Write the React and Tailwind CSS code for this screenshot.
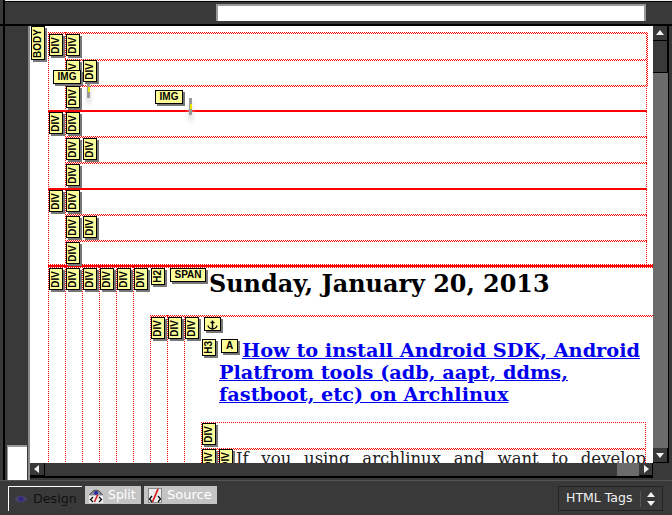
const ORIGIN_X = 30;
const ORIGIN_Y = 26;

// design view markers, drawn in paint order
const tags = [
  { label: "BODY", x: 31, y: 26, h: 34 },
  { label: "DIV", x: 49, y: 34 },
  { label: "DIV", x: 66, y: 34 },
  { label: "DIV", x: 66, y: 60 },
  { label: "IMG", x: 53, y: 70, w: 28, flat: true },
  { label: "DIV", x: 83, y: 60 },
  { label: "DIV", x: 66, y: 86 },
  { label: "IMG", x: 155, y: 90, w: 28, flat: true },
  { label: "DIV", x: 49, y: 112 },
  { label: "DIV", x: 66, y: 112 },
  { label: "DIV", x: 66, y: 138 },
  { label: "DIV", x: 83, y: 138 },
  { label: "DIV", x: 66, y: 164 },
  { label: "DIV", x: 49, y: 190 },
  { label: "DIV", x: 66, y: 190 },
  { label: "DIV", x: 66, y: 216 },
  { label: "DIV", x: 83, y: 216 },
  { label: "DIV", x: 66, y: 242 },
  { label: "DIV", x: 49, y: 268 },
  { label: "DIV", x: 66, y: 268 },
  { label: "DIV", x: 83, y: 268 },
  { label: "DIV", x: 100, y: 268 },
  { label: "DIV", x: 117, y: 268 },
  { label: "DIV", x: 134, y: 268 },
  { label: "H2", x: 151, y: 268, h: 17 },
  { label: "SPAN", x: 170, y: 268, w: 36, flat: true },
  { label: "DIV", x: 151, y: 317 },
  { label: "DIV", x: 168, y: 317 },
  { label: "DIV", x: 185, y: 317 },
  { label: "H3", x: 202, y: 339, h: 17 },
  { label: "A", x: 221, y: 339, w: 17, flat: true },
  { label: "DIV", x: 202, y: 423 },
  { label: "DIV", x: 202, y: 449 },
  { label: "DIV", x: 219, y: 449 },
];

// dotted block edges, page coordinates
const hLines = [
  [48, 32, 599],
  [49, 33, 598],
  [65, 59, 582],
  [66, 60, 581],
  [65, 85, 582],
  [66, 86, 581],
  [65, 136, 582],
  [66, 137, 581],
  [65, 162, 582],
  [66, 163, 581],
  [48, 189, 599],
  [65, 214, 582],
  [66, 215, 581],
  [65, 240, 582],
  [66, 241, 581],
  [48, 264, 605],
  [48, 267, 605],
  [150, 315, 503],
  [151, 316, 502],
  [201, 422, 445],
  [201, 448, 445],
  [202, 449, 444],
];

const vLines = [
  [48, 32, 232],
  [65, 32, 232],
  [646, 32, 232],
  [647, 33, 53],
  [48, 267, 196],
  [65, 267, 196],
  [82, 267, 196],
  [99, 267, 196],
  [116, 267, 196],
  [133, 267, 196],
  [150, 315, 148],
  [167, 315, 148],
  [184, 315, 148],
  [201, 422, 41],
  [218, 449, 14],
  [645, 422, 41],
];

const solidLines = [
  [48, 110, 599],
  [48, 188, 599],
  [48, 265, 605],
];

const place = (x, y) => ({ left: x - ORIGIN_X, top: y - ORIGIN_Y });

const Tag = ({ label, x, y, w = 14, h = 22, flat }) => (
  <div
    className="absolute flex items-center justify-center border border-black bg-[#ffff99] font-['Liberation_Sans',sans-serif] text-[10px] leading-none font-bold text-black shadow-[2px_2px_0_#777]"
    style={{ ...place(x, y), width: flat ? w : 14, height: flat ? 14 : h }}
  >
    {flat ? (
      label
    ) : (
      <span className="rotate-180 [writing-mode:vertical-rl]">{label}</span>
    )}
  </div>
);

const AnchorTag = ({ x, y }) => (
  <div
    className="absolute flex h-[14px] w-[17px] items-center justify-center border border-black bg-[#ffff99] shadow-[2px_2px_0_#777]"
    style={place(x, y)}
  >
    <svg width="11" height="11" viewBox="0 0 11 11">
      <path
        d="M5.5 1.5 V10 M3.5 3.5 H7.5 M1 6.5 Q1.5 9.5 5.5 10 Q9.5 9.5 10 6.5"
        fill="none"
        stroke="#000"
        strokeWidth="1.4"
      />
    </svg>
  </div>
);

const ImagePin = ({ x, y }) => (
  <div
    className="absolute flex h-[17px] w-[3px] justify-center bg-[#999] py-[6px] shadow-[0_6px_5px_#ccc]"
    style={place(x, y)}
  >
    <div className="w-[2px] bg-[#e6e600]" />
  </div>
);

const Triangle = ({ dir }) => {
  const points = {
    up: "1,7 5,2 9,7",
    down: "1,3 5,8 9,3",
    left: "7,1 2,5 7,9",
    right: "3,1 8,5 3,9",
  };
  return (
    <svg width="10" height="10" viewBox="0 0 10 10">
      <polygon points={points[dir]} fill="#f2f2f2" />
    </svg>
  );
};

const ScrollButton = ({ dir, className }) => (
  <div
    className={`flex items-center justify-center border-r border-b border-black bg-[#393939] ${className}`}
  >
    <Triangle dir={dir} />
  </div>
);

const EyeIcon = () => (
  <svg width="14" height="10" viewBox="0 0 14 10">
    <path d="M0 5 Q7 -2 14 5 Q7 12 0 5 Z" fill="#4a4266" />
    <circle cx="7" cy="5" r="2.6" fill="#2f2a80" />
  </svg>
);

const SplitIcon = () => (
  <svg width="14" height="15" viewBox="0 0 14 15">
    <path d="M0.5 7 Q7 -3 13.5 7" fill="#8a8aa0" stroke="#444" />
    <circle cx="7" cy="5" r="2" fill="#2c2c9a" />
    <rect x="0" y="8" width="14" height="7" fill="#eeeeee" />
    <path d="M4 9 L1.5 11.5 L4 14 M10 9 L12.5 11.5 L10 14" fill="none" stroke="#000" strokeWidth="1.2" />
    <path d="M8.5 7 L5.5 14" stroke="#d42020" strokeWidth="1.6" />
  </svg>
);

const SourceIcon = () => (
  <svg width="14" height="15" viewBox="0 0 14 15">
    <rect x="0.5" y="0.5" width="13" height="14" fill="#eeeeee" stroke="#888" />
    <path d="M4 8 L1.5 11 L4 14 M10 8 L12.5 11 L10 14" fill="none" stroke="#000" strokeWidth="1.2" />
    <path d="M10 1 L4.5 14" stroke="#d42020" strokeWidth="1.8" />
  </svg>
);

const Canvas = () => (
  <div className="relative h-[437px] w-[623px] overflow-hidden bg-white font-['DejaVu_Serif',serif]">
    <div className="pt-[240px] pl-[179px]">
      <h2 className="text-[23.9px] leading-[36px] font-bold whitespace-nowrap text-black">
        Sunday, January 20, 2013
      </h2>
      <h3 className="mt-[38px] pl-[10px] text-[19.3px] leading-[22px] font-bold whitespace-nowrap text-[#0000ee]">
        <a href="#" className="underline">
          <span className="ml-[23px]">How to install Android SDK, Android</span>
          <br />
          Platfrom tools (adb, aapt, ddms,
          <br />
          fastboot, etc) on Archlinux
        </a>
      </h3>
      <p className="mt-[42px] ml-[27px] w-[410px] text-justify text-[16.5px] leading-[22px] text-[#222] [text-align-last:justify]">
        If you using archlinux and want to develop
      </p>
    </div>

    {hLines.map(([x, y, w], i) => (
      <div
        key={i}
        className="absolute h-px bg-[repeating-linear-gradient(90deg,#ff0000_0_1px,transparent_1px_2px)]"
        style={{ ...place(x, y), width: w }}
      />
    ))}
    {vLines.map(([x, y, h], i) => (
      <div
        key={i}
        className="absolute w-px bg-[repeating-linear-gradient(180deg,#ff0000_0_1px,transparent_1px_2px)]"
        style={{ ...place(x, y), height: h }}
      />
    ))}
    {solidLines.map(([x, y, w], i) => (
      <div
        key={i}
        className="absolute h-[2px] bg-[#ff0000]"
        style={{ ...place(x, y), width: w }}
      />
    ))}

    <ImagePin x={87} y={81} />
    <ImagePin x={189} y={98} />

    {tags.map((tag, i) => (
      <Tag key={i} {...tag} />
    ))}
    <AnchorTag x={204} y={317} />
  </div>
);

export default function App() {
  return (
    <div className="flex h-[515px] w-[672px] flex-col overflow-hidden bg-[#393939] font-['Liberation_Sans',sans-serif]">
      {/* top bar with the address field */}
      <div className="flex h-[26px] border-b-2 border-black">
        <div className="ml-[3px] flex flex-1 flex-col border-l-2 border-black">
          <div className="h-px bg-[#eeeeee]" />
          <div className="h-px bg-black" />
          <div className="mt-[2px] ml-[211px] h-[17px] w-[430px] border-t-2 border-r-2 border-l-2 border-[#999] bg-white" />
        </div>
      </div>

      <div className="flex h-[454px]">
        {/* left strip */}
        <div className="flex w-[28px] flex-col">
          <div className="ml-[3px] flex h-full flex-col justify-end border-l-2 border-black">
            <div className="ml-[2px] h-[35px] w-[20px] border-t-2 border-l border-[#999] bg-white" />
          </div>
        </div>

        <div className="flex flex-col border-l-2 border-[#8c8c8c]">
          <div className="flex border-r border-black">
            <Canvas />
            {/* vertical scrollbar */}
            <div className="flex h-[437px] w-[15px] flex-col">
              <ScrollButton dir="up" className="h-[15px]" />
              <div className="h-[32px] border-r border-b border-black bg-[#393939]" />
              <div className="flex-1 bg-[#6b6b6b]" />
              <ScrollButton dir="down" className="h-[15px]" />
            </div>
          </div>
          {/* horizontal scrollbar */}
          <div className="flex h-[15px] w-[623px] border-b-2 border-black">
            <ScrollButton dir="left" className="w-[15px]" />
            <div className="flex-1" />
            <div className="w-[22px] bg-[#6b6b6b]" />
            <ScrollButton dir="right" className="w-[14px]" />
          </div>
        </div>
      </div>

      {/* bottom tabs */}
      <div className="flex flex-1 items-start border-t border-[#555] pt-[5px] pl-[8px] font-['DejaVu_Sans',sans-serif] text-[13px]">
        <div className="mr-[3px] flex h-[25px] w-[74px] items-center gap-[5px] border-t border-l border-white pl-[5px] text-[12.7px] text-[#111]">
          <EyeIcon />
          <span>Design</span>
        </div>
        <div className="mr-[3px] flex h-[18px] w-[56px] items-center gap-[5px] bg-[#c4c4c4] pl-[4px] text-[12.5px] text-white">
          <SplitIcon />
          <span>Split</span>
        </div>
        <div className="flex h-[18px] w-[73px] items-center gap-[5px] bg-[#c4c4c4] pl-[4px] text-white">
          <SourceIcon />
          <span>Source</span>
        </div>
        <div className="mr-[9px] ml-auto flex h-[25px] w-[105px] items-center border border-[#222] pl-[7px] text-[12.5px] text-[#f2f2f2]">
          <span>HTML Tags</span>
          <div className="mr-[2px] ml-auto flex h-[16px] w-[20px] flex-col items-center justify-center border-l border-[#555]">
            <svg width="10" height="16" viewBox="0 0 10 16">
              <polygon points="1,6 5,1 9,6" fill="#f2f2f2" />
              <polygon points="1,10 5,15 9,10" fill="#f2f2f2" />
            </svg>
          </div>
        </div>
      </div>
    </div>
  );
}
